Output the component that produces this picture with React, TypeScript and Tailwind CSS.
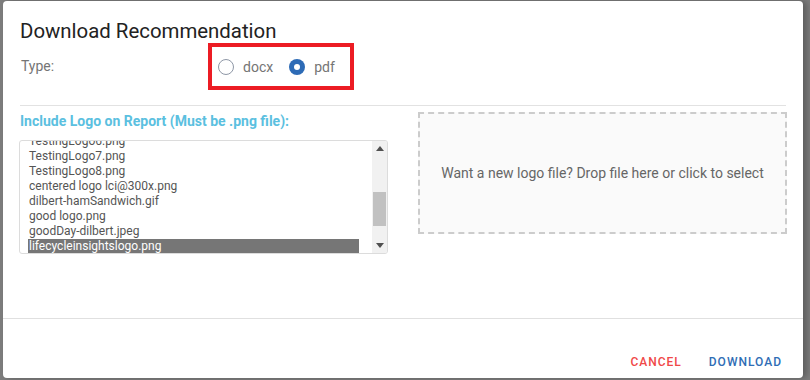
import { useEffect, useRef } from 'react';

const logos = [
  'LCI-logo.png',
  'TestingLogo.png',
  'TestingLogo1.png',
  'TestingLogo2.png',
  'TestingLogo3.png',
  'TestingLogo4.png',
  'TestingLogo5.png',
  'TestingLogo6.png',
  'TestingLogo7.png',
  'TestingLogo8.png',
  'centered logo lci@300x.png',
  'dilbert-hamSandwich.gif',
  'good logo.png',
  'goodDay-dilbert.jpeg',
  'lifecycleinsightslogo.png',
  'logo-dark.png',
  'newLogo.png',
  'test.png',
];

function Radio({ label, checked }: { label: string; checked?: boolean }) {
  return (
    <label className="flex items-center gap-[9px] text-[14px] text-[#757575]">
      {checked ? (
        <span className="flex h-[16px] w-[16px] items-center justify-center rounded-full bg-[#2d6bb6]">
          <span className="h-[6px] w-[6px] rounded-full bg-white" />
        </span>
      ) : (
        <span className="h-[16px] w-[16px] rounded-full border-[1.5px] border-[#8e97a6] bg-white" />
      )}
      <span className="leading-[20px]">{label}</span>
    </label>
  );
}

function Arrow({ up }: { up?: boolean }) {
  return (
    <div className="flex h-[15px] items-center justify-center">
      <svg width="8" height="5" viewBox="0 0 8 5">
        <path d={up ? 'M0 5 L4 0 L8 5 Z' : 'M0 0 L4 5 L8 0 Z'} fill="#505050" />
      </svg>
    </div>
  );
}

export default function App() {
  const listRef = useRef<HTMLDivElement>(null);

  useEffect(() => {
    if (listRef.current) listRef.current.scrollTop = 112;
  }, []);

  return (
    <div className="h-[380px] w-[810px] overflow-hidden bg-[#7d7d7d] pl-[3px] pt-[1px] font-['Roboto',sans-serif]">
      <div className="flex h-[377px] w-[800px] flex-col rounded-[4px] bg-white shadow-[4px_0_6px_rgba(0,0,0,0.25)]">
        <div className="px-[17px] pt-[18px]">
          <h2 className="h-[24px] text-[20.4px] leading-[24px] text-[#222]">Download Recommendation</h2>
          <div className="flex h-[47px] items-center">
            <span className="w-[188px] pl-[1px] text-[14px] text-[#757575]">Type:</span>
            <div className="flex h-[47px] items-center gap-[16px] border-[4px] border-[#ec1c24] pl-[6px] pr-[15px]">
              <Radio label="docx" />
              <Radio label="pdf" checked />
            </div>
          </div>
          <div className="mt-[15px] h-px bg-[#e2e2e2]" />
        </div>

        <div className="mt-[6px] grid grid-cols-2 gap-[30px] px-[16px]">
          <div>
            <div className="pl-[1px] text-[14px] font-bold leading-[18px] text-[#5bc0e0]">
              Include Logo on Report (Must be .png file):
            </div>
            <div className="mt-[10px] flex h-[114px] overflow-hidden rounded-[3px] border border-[#dcdcdc]">
              <div
                ref={listRef}
                className="flex-1 overflow-hidden pl-[8px] pr-[13px] text-[12px] leading-[15px] text-[#555]"
              >
                {logos.map((name) => (
                  <div
                    key={name}
                    className={
                      name === 'lifecycleinsightslogo.png'
                        ? 'h-[15px] whitespace-nowrap bg-[#767676] px-px text-white'
                        : 'h-[15px] whitespace-nowrap px-px'
                    }
                  >
                    {name}
                  </div>
                ))}
              </div>
              <div className="flex w-[15px] flex-col bg-[#f1f1f1]">
                <Arrow up />
                <div className="flex-1 px-px pt-[36px]">
                  <div className="h-[34px] bg-[#c1c1c1]" />
                </div>
                <Arrow />
              </div>
            </div>
          </div>
          <div className="flex h-[122px] items-center justify-center border-2 border-dashed border-[#cccccc] bg-[#fafafa] text-[14px] text-[#666]">
            Want a new logo file? Drop file here or click to select
          </div>
        </div>

        <div className="mt-auto h-px bg-[#e0e0e0]" />
        <div className="flex h-[59px] justify-end gap-[27px] pr-[21px] pt-[27px]">
          <button className="text-[12px] font-medium leading-[20px] tracking-[1px] text-[#f04848]">CANCEL</button>
          <button className="text-[12px] font-medium leading-[20px] tracking-[1px] text-[#2f6db5]">DOWNLOAD</button>
        </div>
      </div>
    </div>
  );
}
